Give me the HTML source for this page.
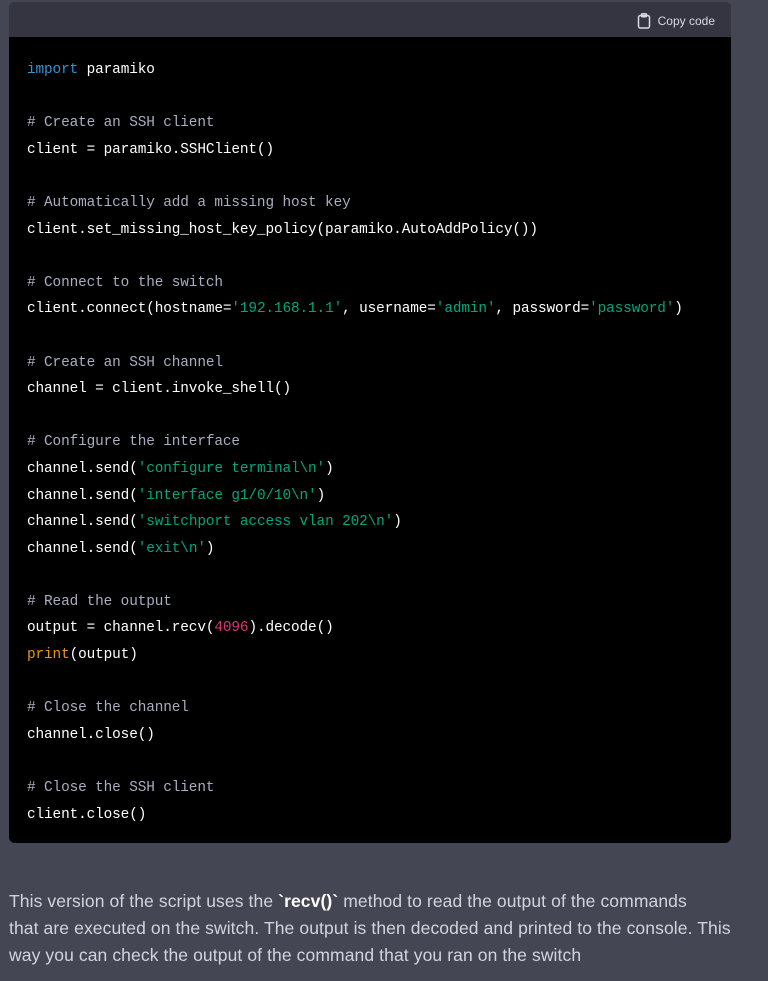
<!DOCTYPE html>
<html><head><meta charset="utf-8"><style>
html,body{margin:0;padding:0;background:#444654;width:768px;height:981px;overflow:hidden}
.box{position:absolute;left:9px;top:2px;width:722px;height:841px;border-radius:6px;overflow:hidden;background:#000}
.hdr{height:35px;background:#343541;position:relative;color:#d9d9e3;font:12px "Liberation Sans",sans-serif}
.copy{position:absolute;right:16px;top:11px;display:flex;align-items:center;gap:7px}
pre{margin:0;padding:0;position:absolute;top:55px;left:18px;font:14.4px/26.6px "Liberation Mono",monospace;letter-spacing:-0.12px;color:#fff}
.k{color:#2e95d3}.s{color:#00a67d}.n{color:#df3079}.c{color:#a9aec1}.b{color:#e9950c}
.p{position:absolute;left:9px;top:888px;color:#d1d5db;font:17.5px/27px "Liberation Sans",sans-serif;letter-spacing:0.1px;white-space:nowrap}
.p b{color:#fff;font-weight:bold}
</style></head><body>
<div class="box">
<div class="hdr"><div class="copy"><svg width="14" height="16" viewBox="0 0 14 16" fill="none" stroke="#d9d9e3" stroke-width="1.5"><rect x="1.5" y="2.5" width="11" height="12.5" rx="2"/><rect x="4.5" y="0.8" width="5" height="3" rx="1"/></svg>Copy code</div></div>
<pre><span class="k">import</span> paramiko

<span class="c"># Create an SSH client</span>
client = paramiko.SSHClient()

<span class="c"># Automatically add a missing host key</span>
client.set_missing_host_key_policy(paramiko.AutoAddPolicy())

<span class="c"># Connect to the switch</span>
client.connect(hostname=<span class="s">'192.168.1.1'</span>, username=<span class="s">'admin'</span>, password=<span class="s">'password'</span>)

<span class="c"># Create an SSH channel</span>
channel = client.invoke_shell()

<span class="c"># Configure the interface</span>
channel.send(<span class="s">'configure terminal\n'</span>)
channel.send(<span class="s">'interface g1/0/10\n'</span>)
channel.send(<span class="s">'switchport access vlan 202\n'</span>)
channel.send(<span class="s">'exit\n'</span>)

<span class="c"># Read the output</span>
output = channel.recv(<span class="n">4096</span>).decode()
<span class="b">print</span>(output)

<span class="c"># Close the channel</span>
channel.close()

<span class="c"># Close the SSH client</span>
client.close()</pre>
</div>
<div class="p">This version of the script uses the <b>`recv()`</b> method to read the output of the commands<br>that are executed on the switch. The output is then decoded and printed to the console. This<br>way you can check the output of the command that you ran on the switch</div>
</body></html>
